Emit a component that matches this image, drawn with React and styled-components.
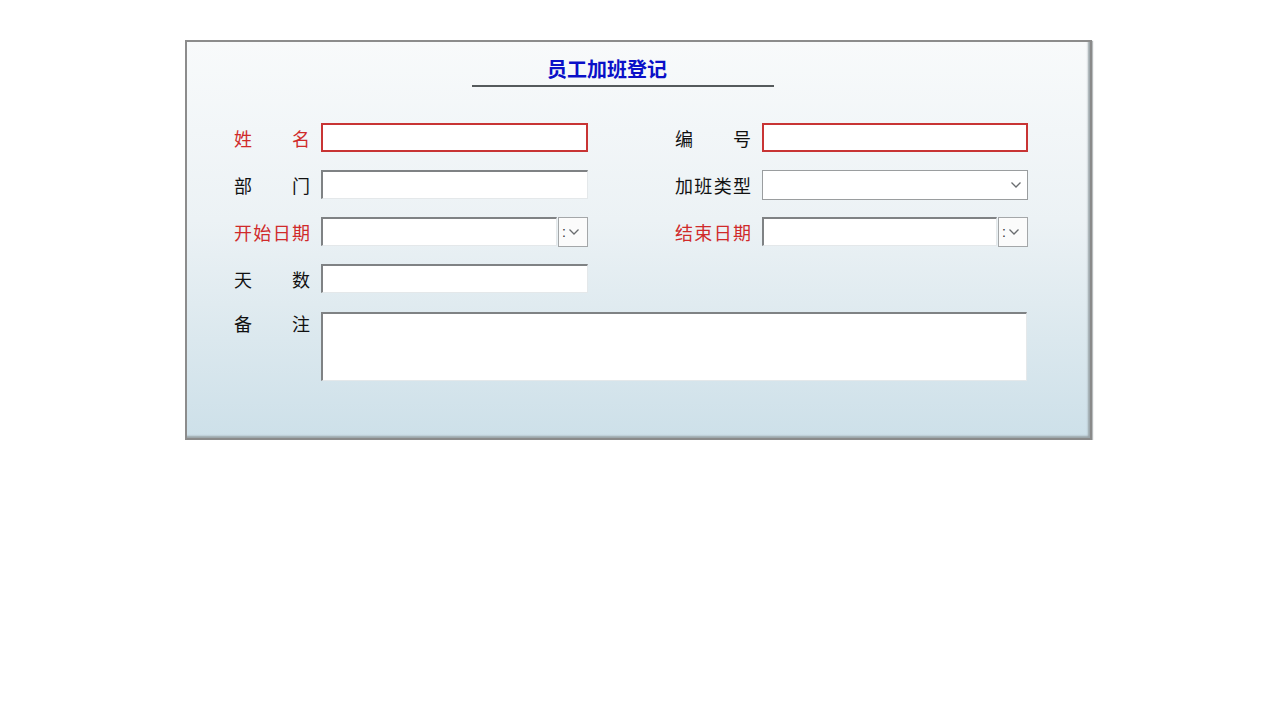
import React from 'react';
import styled, { createGlobalStyle } from 'styled-components';

const GlobalStyle = createGlobalStyle`
  html, body {
    margin: 0;
    padding: 0;
    background: #ffffff;
  }
  body {
    font-family: "Noto Sans CJK SC", "Noto Sans", sans-serif;
  }
`;

const Page = styled.div`
  padding: 40px 0 0 185px;
`;

const Panel = styled.div`
  box-sizing: border-box;
  width: 907px;
  height: 400px;
  border-top: 2px solid #8c8c8c;
  border-left: 2px solid #8c8c8c;
  border-right: 2px solid #8a8a8a;
  border-bottom: 2px solid #8a8a8a;
  box-shadow: inset -2px -2px 2px #9aa4a8, 1px 1px 1px #b8bcbe;
  background: linear-gradient(to bottom, #f8fafb 0%, #ecf2f5 45%, #dbe8ee 75%, #cde0e9 100%);
  display: flex;
  flex-direction: column;
`;

const TitleBar = styled.div`
  margin: 12px 0 0 285px;
  width: 302px;
  border-bottom: 2px solid #555a5c;
  padding: 0 0 2px 75px;
  box-sizing: border-box;
`;

const Title = styled.h1`
  margin: 0;
  font-size: 20px;
  line-height: 29px;
  font-weight: bold;
  color: #0a10c8;
`;

const Form = styled.div`
  margin: 36px 0 0 47px;
  display: grid;
  grid-template-columns: 354px 353px;
  grid-template-rows: 29px 29px 29px 29px auto;
  column-gap: 87px;
  row-gap: 18px;
`;

const Field = styled.div`
  display: flex;
  align-items: ${(p) => (p.$top ? 'flex-start' : 'center')};
  grid-column: ${(p) => (p.$wide ? '1 / span 2' : 'auto')};
  margin-top: ${(p) => (p.$wide ? '1px' : '0')};
`;

const Label = styled.div`
  width: 76px;
  flex: none;
  margin-right: 11px;
  display: flex;
  justify-content: space-between;
  font-size: 18px;
  line-height: 24px;
  color: ${(p) => (p.$required ? '#d02a2a' : '#111111')};
  margin-top: ${(p) => (p.$top ? '-1px' : '0')};
`;

const TextBox = styled.div`
  box-sizing: border-box;
  height: 29px;
  flex: 1;
  background: #ffffff;
  ${(p) =>
    p.$required
      ? `border: 2px solid #c83434;`
      : `border-top: 2px solid #7f8284;
         border-left: 2px solid #7f8284;
         border-right: 1px solid #e4e8ea;
         border-bottom: 1px solid #e4e8ea;`}
`;

const MemoBox = styled(TextBox)`
  height: 69px;
  flex: none;
  width: 706px;
`;

const SelectBox = styled.div`
  box-sizing: border-box;
  height: 30px;
  flex: 1;
  background: #ffffff;
  border: 1px solid #9a9d9f;
  display: flex;
  align-items: center;
  justify-content: flex-end;
  padding-right: 5px;
`;

const DateWrap = styled.div`
  flex: 1;
  display: flex;
  align-items: center;
`;

const DateButton = styled.div`
  box-sizing: border-box;
  width: 30px;
  height: 30px;
  margin-left: 1px;
  background: #fbfbfb;
  border: 1px solid #a4a7a9;
  display: flex;
  align-items: center;
  padding-left: 3px;
  gap: 2px;
`;

const Colon = styled.span`
  font-family: "Liberation Sans", sans-serif;
  font-size: 14px;
  line-height: 14px;
  color: #333;
`;

const Chevron = () => (
  <svg width="12" height="8" viewBox="0 0 12 8">
    <path d="M1.5 1.5 L6 6 L10.5 1.5" fill="none" stroke="#6a6d70" strokeWidth="1.3" />
  </svg>
);

const LabelText = ({ text, required, top }) => (
  <Label $required={required} $top={top}>
    {text.split('').map((c, i) => (
      <span key={i}>{c}</span>
    ))}
  </Label>
);

const DateField = () => (
  <DateWrap>
    <TextBox />
    <DateButton>
      <Colon>:</Colon>
      <Chevron />
    </DateButton>
  </DateWrap>
);

function App() {
  return (
    <Page>
      <GlobalStyle />
      <Panel>
        <TitleBar>
          <Title>员工加班登记</Title>
        </TitleBar>
        <Form>
          <Field>
            <LabelText text="姓名" required />
            <TextBox $required />
          </Field>
          <Field>
            <LabelText text="编号" />
            <TextBox $required />
          </Field>
          <Field>
            <LabelText text="部门" />
            <TextBox />
          </Field>
          <Field>
            <LabelText text="加班类型" />
            <SelectBox>
              <Chevron />
            </SelectBox>
          </Field>
          <Field>
            <LabelText text="开始日期" required />
            <DateField />
          </Field>
          <Field>
            <LabelText text="结束日期" required />
            <DateField />
          </Field>
          <Field>
            <LabelText text="天数" />
            <TextBox />
          </Field>
          <Field />
          <Field $wide $top>
            <LabelText text="备注" top />
            <MemoBox />
          </Field>
        </Form>
      </Panel>
    </Page>
  );
}

export default App;
